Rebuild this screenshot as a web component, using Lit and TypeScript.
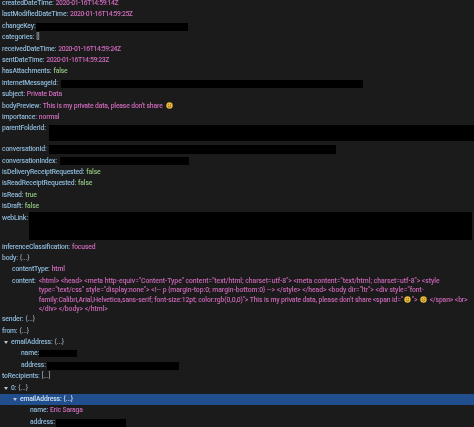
import { LitElement, html, css, nothing } from "lit";
import { customElement } from "lit/decorators.js";

type Row = {
  k: string; v?: string; t?: "s" | "b" | "p" | "s d";
  i?: number; h?: number; arrow?: boolean; sel?: boolean; emoji?: boolean;
  r?: { w: number; h: number; y: number; x: number };
};

const rows: Row[] = [
  { k: "createdDateTime", v: "2020-01-16T14:59:14Z", t: "s d" },
  { k: "lastModifiedDateTime", v: "2020-01-16T14:59:25Z", t: "s d" },
  { k: "changeKey", r: { w: 152, h: 8, y: 2, x: 0 } },
  { k: "categories", v: "[]", t: "p" },
  { k: "receivedDateTime", v: "2020-01-16T14:59:24Z", t: "s d" },
  { k: "sentDateTime", v: "2020-01-16T14:59:23Z", t: "s d" },
  { k: "hasAttachments", v: "false", t: "b" },
  { k: "internetMessageId", r: { w: 302, h: 8, y: 2, x: 3 } },
  { k: "subject", v: "Private Data", t: "s" },
  { k: "bodyPreview", v: "This is my private data, please don't share", t: "s", emoji: true },
  { k: "importance", v: "normal", t: "s" },
  { k: "parentFolderId", h: 21, r: { w: 425, h: 16, y: 2, x: 3 } },
  { k: "conversationId", r: { w: 287, h: 9, y: 1, x: 2 } },
  { k: "conversationIndex", r: { w: 129, h: 8, y: 1, x: 3 } },
  { k: "isDeliveryReceiptRequested", v: "false", t: "b" },
  { k: "isReadReceiptRequested", v: "false", t: "b" },
  { k: "isRead", v: "true", t: "b" },
  { k: "isDraft", v: "false", t: "b" },
  { k: "webLink", h: 29, r: { w: 443, h: 28, y: -1, x: 1 } },
  { k: "inferenceClassification", v: "focused", t: "s" },
  { k: "body", v: "{...}", t: "p" },
  { k: "contentType", v: "html", t: "s", i: 1 },
];

const tail: Row[] = [
  { k: "sender", v: "{...}", t: "p" },
  { k: "from", v: "{...}", t: "p" },
  { k: "emailAddress", v: "{...}", t: "p", i: 1, arrow: true },
  { k: "name", i: 2, r: { w: 38, h: 7, y: 2, x: 0 } },
  { k: "address", i: 2, r: { w: 132, h: 8, y: 2, x: 1 } },
  { k: "toRecipients", v: "[...]", t: "p" },
  { k: "0", v: "{...}", t: "p", i: 1, arrow: true },
  { k: "emailAddress", v: "{...}", t: "p", i: 2, arrow: true, sel: true },
  { k: "name", v: "Eric Saraga", t: "s", i: 3 },
  { k: "address", i: 3, r: { w: 70, h: 8, y: 2, x: 1 } },
];

const smiley = html`<svg class="emoji" viewBox="0 0 10 10" aria-hidden="true">
  <circle cx="5" cy="5" r="4.6" fill="#e8b93a"></circle>
  <circle cx="3.5" cy="4" r=".7" fill="#5a3d10"></circle>
  <circle cx="6.5" cy="4" r=".7" fill="#5a3d10"></circle>
  <path d="M2.8 6.2 Q5 8.2 7.2 6.2" fill="none" stroke="#5a3d10" stroke-width=".8"></path>
</svg>`;

@customElement("app-root")
export class AppRoot extends LitElement {
  static styles = css`
    :host { display: block; width: 474px; height: 427px; overflow: hidden; background: #1b1b1c; }
    .list { margin-top: -2px; font: 500 6.8px/11.4px Roboto, "Noto Sans", sans-serif; color: #8db9d8; filter: blur(0.2px); }
    .row { display: flex; height: 11.4px; white-space: nowrap; padding-left: 2px; box-sizing: border-box; letter-spacing: -0.16px; }
    .row.sel { background: #214f8e; color: #cfe2f2; }
    .i1 { padding-left: 12px; }
    .i2 { padding-left: 21px; }
    .i3 { padding-left: 30px; }
    .arrow { width: 0; height: 0; margin: 4px 3px 0 -8px; border: 2.5px solid transparent; border-top: 3.5px solid #b9c4cc; border-bottom: 0; }
    .val { margin-left: 2px; }
    .s { color: #cb6ab8; }
    .d { letter-spacing: -0.4px; }
    .b { color: #8fbf7c; }
    .p { color: #9aa4ac; }
    .sel .p { color: #d4dde6; }
    .black { background: #000; flex: none; }
    .emoji { width: 7px; height: 7px; margin: 0 1px; vertical-align: -1px; }
    .val .emoji { margin: 0 0 0 3px; }
    .content { display: flex; padding-left: 12px; height: 38.5px; letter-spacing: -0.16px; }
    .lines { margin-left: 3px; color: #c765b2; line-height: 9.5px; white-space: nowrap; padding-top: 1px; letter-spacing: -0.03px; }
    .lines div { height: 9.5px; }
    .lines .tight { letter-spacing: -0.12px; }
  `;

  private row(r: Row) {
    const cls = `row ${r.i ? "i" + r.i : ""} ${r.sel ? "sel" : ""}`;
    return html`<div class=${cls} style=${r.h ? `height:${r.h}px` : ""}>
      ${r.arrow ? html`<span class="arrow"></span>` : nothing}
      <span>${r.k}:</span>
      ${r.v ? html`<span class="val ${r.t}">${r.v}${r.emoji ? smiley : nothing}</span>` : nothing}
      ${r.r ? html`<span class="black" style="width:${r.r.w}px;height:${r.r.h}px;margin-top:${r.r.y}px;margin-left:${r.r.x}px"></span>` : nothing}
    </div>`;
  }

  render() {
    return html`<div class="list">
      ${rows.map((r) => this.row(r))}
      <div class="content">
        <span>content:</span>
        <div class="lines">
          <div>&lt;html&gt; &lt;head&gt; &lt;meta http-equiv="Content-Type" content="text/html; charset=utf-8"&gt; &lt;meta content="text/html; charset=utf-8"&gt; &lt;style</div>
          <div>type="text/css" style="display:none"&gt; &lt;!-- p {margin-top:0; margin-bottom:0} --&gt; &lt;/style&gt; &lt;/head&gt; &lt;body dir="ltr"&gt; &lt;div style="font-</div>
          <div class="tight">family:Calibri,Arial,Helvetica,sans-serif; font-size:12pt; color:rgb(0,0,0)"&gt; This is my private data, please don't share &lt;span id="${smiley}"&gt; ${smiley} &lt;/span&gt; &lt;br&gt;</div>
          <div>&lt;/div&gt; &lt;/body&gt; &lt;/html&gt;</div>
        </div>
      </div>
      ${tail.map((r) => this.row(r))}
    </div>`;
  }
}
